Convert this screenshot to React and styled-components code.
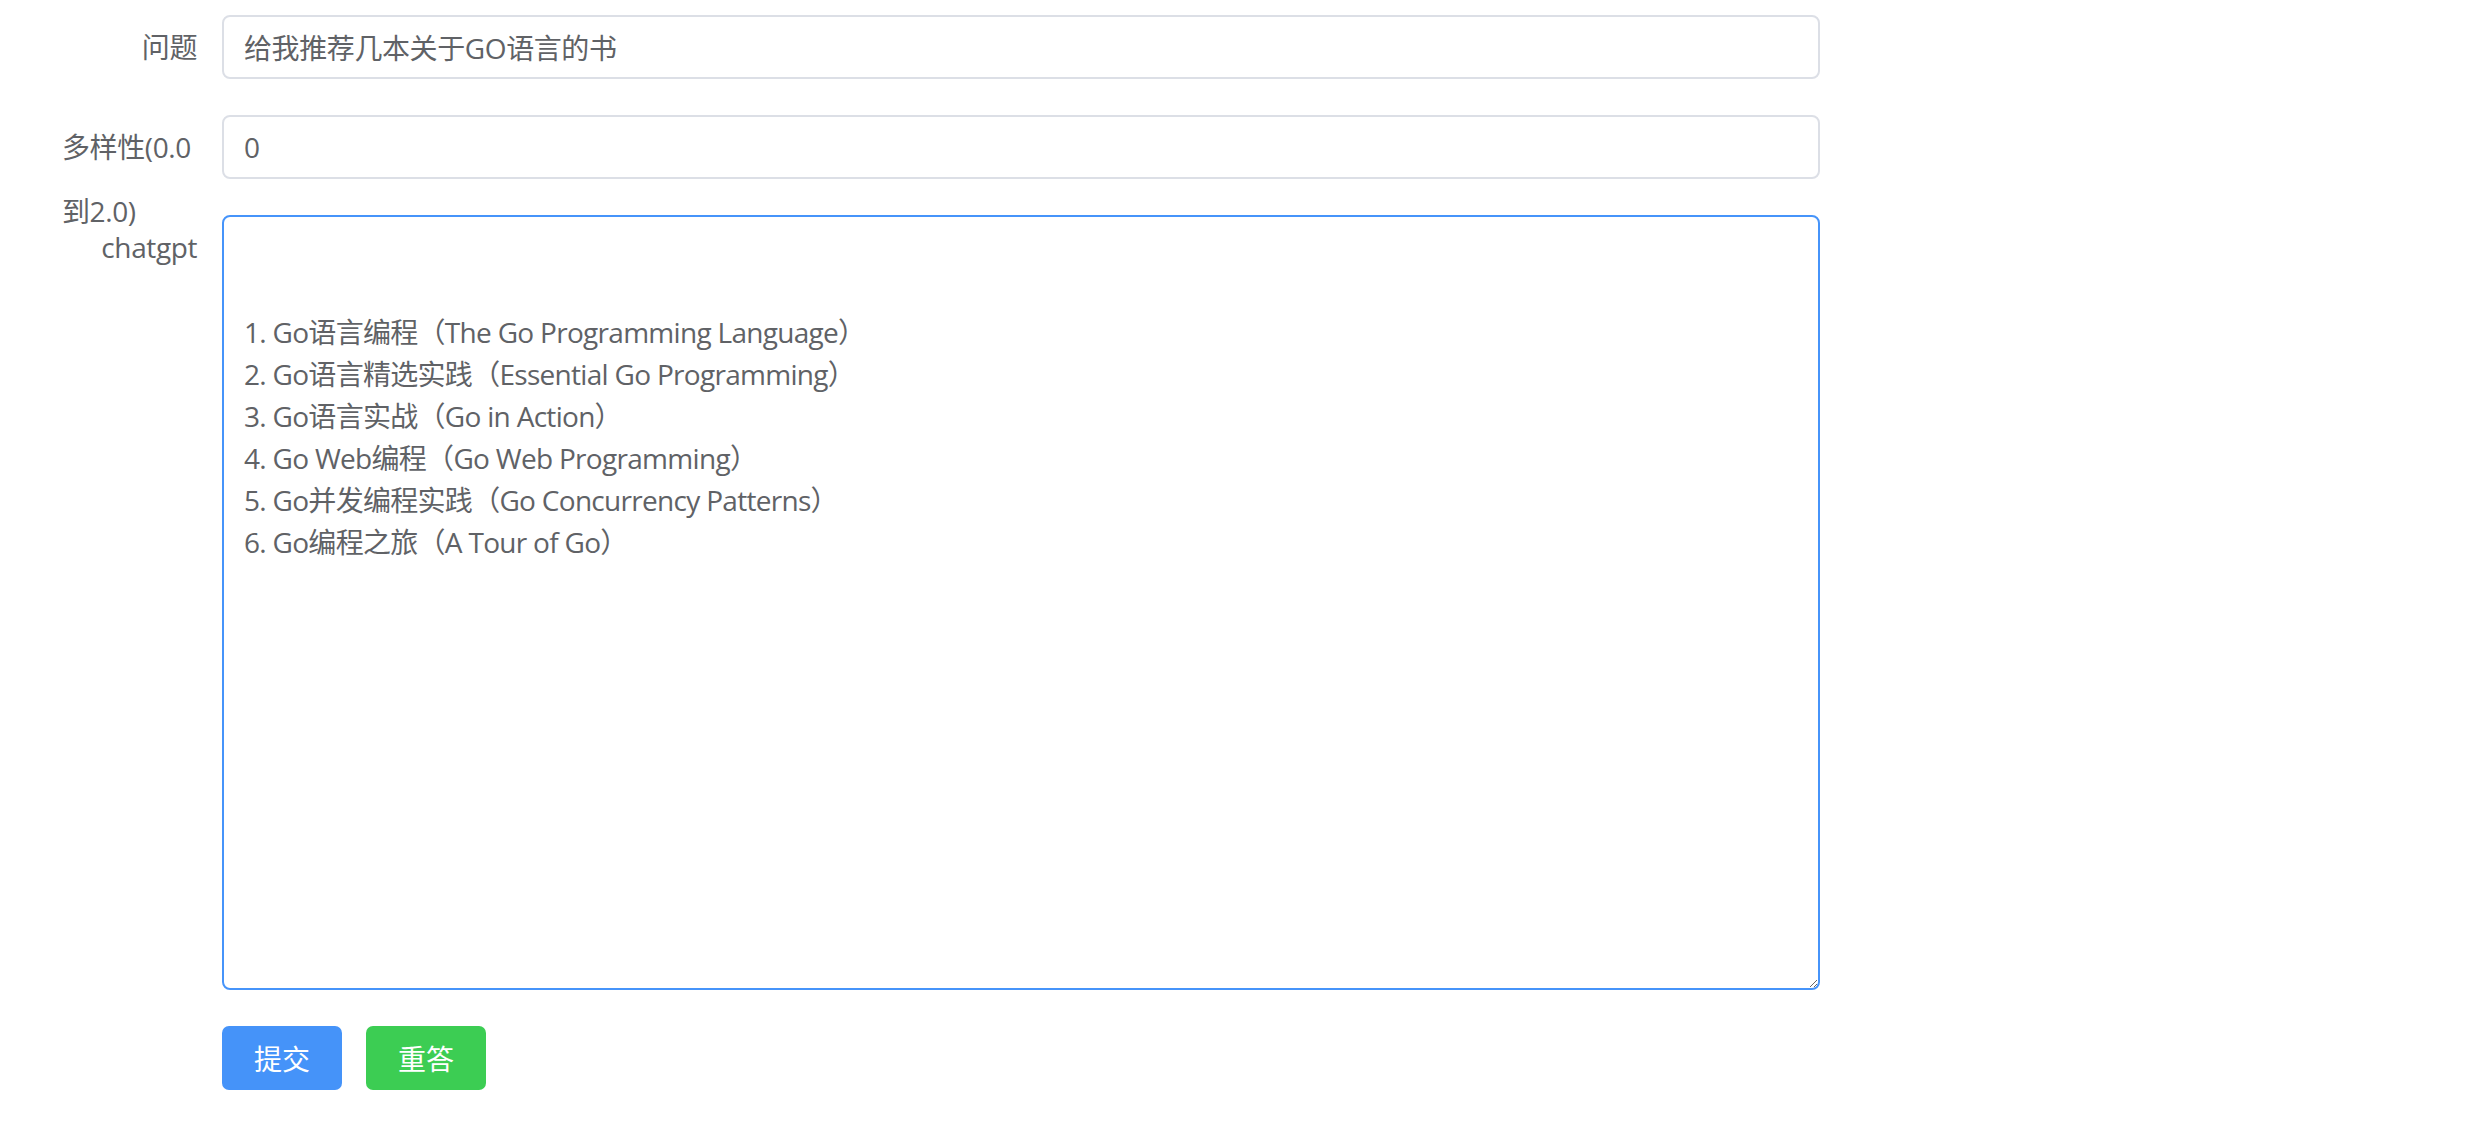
import React from "react";
import styled, { createGlobalStyle } from "styled-components";

const Global = createGlobalStyle`
  html, body { margin: 0; padding: 0; background: #ffffff; }
  body { font-family: "Open Sans", "Noto Sans CJK SC", sans-serif; color: #606266; }
  * { box-sizing: border-box; }
`;

const Form = styled.form`
  padding: 15px 0 0 62px;
  width: 1820px;
`;

const Item = styled.div`
  display: flex;
  align-items: flex-start;
  margin-bottom: 36px;
`;

const Label = styled.label`
  flex: 0 0 160px;
  width: 160px;
  height: 64px;
  padding-right: 25px;
  text-align: right;
  font-size: 28px;
  line-height: 64px;
  letter-spacing: -0.4px;
  color: #606266;
`;

const LabelText = styled.span`
  display: inline-block;
  text-align: left;
`;

const Field = styled.div`
  flex: 1;
  display: flex;
`;

const TextInput = styled.input`
  width: 100%;
  height: 64px;
  padding: 0 20px;
  border: 2px solid #dcdfe6;
  border-radius: 8px;
  font-family: inherit;
  font-size: 28px;
  letter-spacing: -0.4px;
  color: #606266;
  background: #fff;
  outline: none;
`;

const Area = styled.textarea`
  width: 100%;
  height: 775px;
  padding: 10px 20px;
  border: 2px solid #4694fa;
  border-radius: 8px;
  font-family: inherit;
  font-size: 28px;
  line-height: 1.5;
  letter-spacing: -0.7px;
  color: #606266;
  background: #fff;
  outline: none;
  resize: vertical;
  display: block;
`;

const Actions = styled.div`
  display: flex;
  gap: 24px;
  padding-left: 160px;
`;

const Button = styled.button`
  width: 120px;
  height: 64px;
  border: none;
  border-radius: 7px;
  background: ${(p) => p.$bg};
  color: #fff;
  font-family: inherit;
  font-size: 28px;
  cursor: pointer;
`;

const answer = `

1. Go语言编程（The Go Programming Language）
2. Go语言精选实践（Essential Go Programming）
3. Go语言实战（Go in Action）
4. Go Web编程（Go Web Programming）
5. Go并发编程实践（Go Concurrency Patterns）
6. Go编程之旅（A Tour of Go）`;

export default function App() {
  return (
    <>
      <Global />
      <Form onSubmit={(e) => e.preventDefault()}>
        <Item>
          <Label><LabelText>问题</LabelText></Label>
          <Field>
            <TextInput defaultValue="给我推荐几本关于GO语言的书" />
          </Field>
        </Item>
        <Item>
          <Label><LabelText>多样性(0.0到2.0)</LabelText></Label>
          <Field>
            <TextInput defaultValue="0" />
          </Field>
        </Item>
        <Item>
          <Label><LabelText>chatgpt</LabelText></Label>
          <Field>
            <Area defaultValue={answer} />
          </Field>
        </Item>
        <Actions>
          <Button type="button" $bg="#4593f9">提交</Button>
          <Button type="button" $bg="#3ccd53">重答</Button>
        </Actions>
      </Form>
    </>
  );
}
